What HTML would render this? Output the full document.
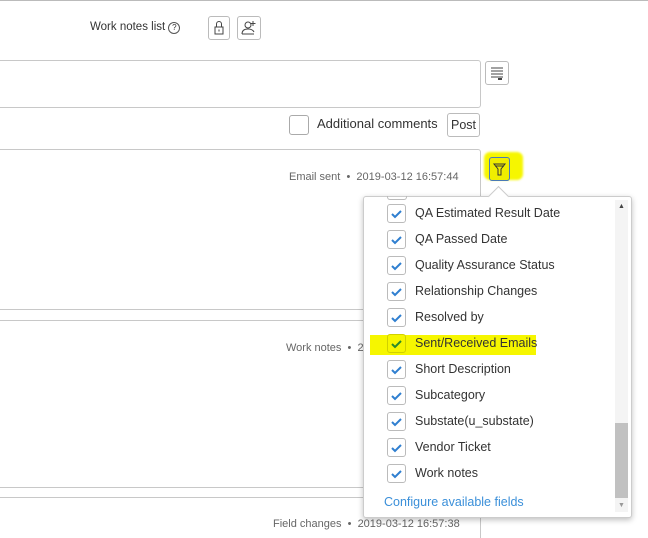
<!DOCTYPE html>
<html><head><style>
html,body{margin:0;width:648px;height:538px;overflow:hidden}
body{position:relative;background:#fff;font-family:"Liberation Sans",sans-serif;color:#333}
.a{position:absolute}
.box{position:absolute;border:1px solid #c8c8c8;border-radius:3px;background:#fff}
.btn{position:absolute;border:1px solid #bbb;border-radius:3px;background:#fff}
.meta{position:absolute;font-size:11px;color:#666;white-space:nowrap}
.cb{position:absolute;left:387px;width:17px;height:17px;border:1px solid #bbb;border-radius:3px;background:#fff}
.lbl{position:absolute;left:415px;font-size:12.5px;color:#333;white-space:nowrap}
</style></head><body>
<div class="a" style="left:0;top:0;width:648px;height:1px;background:#bbb"></div>
<div class="a" style="left:90px;top:21px;font-size:11.5px;color:#333">Work notes list <span style="display:inline-block;width:10px;height:10px;border:1px solid #555;border-radius:50%;font-size:8px;text-align:center;line-height:10px">?</span></div>
<div class="btn" style="left:208px;top:16px;width:20px;height:22px"><svg width="20" height="22"><rect x="6" y="10" width="8" height="7" fill="none" stroke="#444"/><path d="M7.5 10V7a2.5 2.5 0 0 1 5 0v3" fill="none" stroke="#444"/><rect x="9.5" y="12.5" width="1" height="2" fill="#444"/></svg></div>
<div class="btn" style="left:237px;top:16px;width:22px;height:22px"><svg width="22" height="22"><circle cx="10" cy="8" r="3" fill="none" stroke="#444"/><path d="M4 17c0-4 3-5 6-5s5 1 6 3M4 17h12" fill="none" stroke="#444"/><path d="M15 4v5M12.5 6.5h5" stroke="#444"/></svg></div>
<div class="box" style="left:-4px;top:60px;width:483px;height:46px"></div>
<div class="btn" style="left:485px;top:61px;width:22px;height:22px"><svg width="22" height="22"><path d="M5 6h12M5 9h12M5 12h12M5 15h12" stroke="#444"/><rect x="12" y="16" width="4" height="2" fill="#444"/></svg></div>
<div class="a" style="left:289px;top:115px;width:18px;height:18px;border:1px solid #aaa;border-radius:3px"></div>
<div class="a" style="left:317px;top:116px;font-size:13px;color:#333">Additional comments</div>
<div class="btn" style="left:447px;top:113px;width:31px;height:22px;font-size:12.5px;text-align:center;line-height:22px">Post</div>
<div class="box" style="left:-4px;top:149px;width:483px;height:159px"></div>
<div class="meta" style="left:289px;top:171px">Email sent &nbsp;•&nbsp; 2019-03-12 16:57:44</div>
<div class="a" style="left:484px;top:152px;width:39px;height:28px;background:#f6f600;border-radius:6px;filter:blur(1px)"></div>
<div class="a" style="left:489px;top:157px;width:19px;height:22px;border:1px solid #4a7ab5;border-radius:3px;background:#f0ee00"><svg width="19" height="22"><path d="M4 6h11l-4 5v6h-3v-6z M5 8h9" fill="none" stroke="#333"/></svg></div>
<div class="box" style="left:-4px;top:320px;width:483px;height:166px"></div>
<div class="meta" style="left:286px;top:342px">Work notes &nbsp;•&nbsp; 2</div>
<div class="box" style="left:-4px;top:497px;width:483px;height:60px"></div>
<div class="meta" style="left:273px;top:518px">Field changes &nbsp;•&nbsp; 2019-03-12 16:57:38</div>
<div class="a" style="left:363px;top:196px;width:267px;height:320px;background:#fff;border:1px solid #ccc;border-radius:3px;box-shadow:0 2px 6px rgba(0,0,0,.25)"></div>
<div class="a" style="left:491px;top:189px;width:14px;height:14px;background:#fff;border-left:1px solid #ccc;border-top:1px solid #ccc;transform:rotate(45deg)"></div>
<div class="a" style="left:387px;top:196px;width:18px;height:3px;border:1px solid #bbb;border-top:none;border-radius:0 0 3px 3px"></div>
<div class="a" style="left:615px;top:200px;width:13px;height:312px;background:#f4f4f4"></div>
<div class="a" style="left:618px;top:203px;font-size:7px;color:#444">▲</div>
<div class="a" style="left:615px;top:423px;width:13px;height:75px;background:#c1c1c1"></div>
<div class="a" style="left:618px;top:502px;font-size:7px;color:#999">▼</div>
<div class="a" style="left:370px;top:335px;width:166px;height:20px;background:#f6f600"></div>
<div id="list"></div>
<div class="a" style="left:384px;top:495px;font-size:12.5px;color:#3a8fd9">Configure available fields</div>
<script>
var items=["QA Estimated Result Date","QA Passed Date","Quality Assurance Status","Relationship Changes","Resolved by","Sent/Received Emails","Short Description","Subcategory","Substate(u_substate)","Vendor Ticket","Work notes"];
var h="";items.forEach(function(t,i){var y=204+i*26;var c=i==5?"#2a8a2a":"#2f7fd0";
h+='<div class="cb" style="top:'+y+'px;'+(i==5?'background:#f6f600;border-color:#d0d000':'')+'"><svg width="17" height="17"><path d="M4 9l3 3 6-6" fill="none" stroke="'+c+'" stroke-width="2"/></svg></div><div class="lbl" style="top:'+(y+2)+'px">'+t+'</div>';});
document.getElementById("list").innerHTML=h;
</script>
</body></html>
